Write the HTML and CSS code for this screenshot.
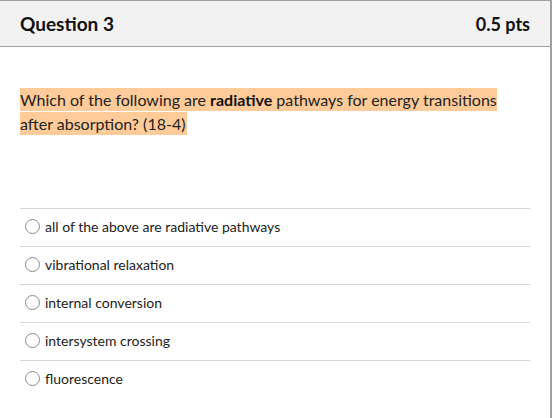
FILE: index.html
```html
<!DOCTYPE html>
<html>
<head>
<meta charset="utf-8">
<link rel="stylesheet" href="styles.css">
</head>
<body>
<div class="question">
  <div class="header">
    <span class="title">Question 3</span>
    <span class="pts">0.5 pts</span>
  </div>
  <div class="body">
    <p class="text"><span class="hl">Which of the following are <b>radiative</b> pathways for energy transitions after absorption? (18-4)</span></p>
    <div class="answers">
      <label class="answer"><span class="radio"></span>all of the above are radiative pathways</label>
      <label class="answer"><span class="radio"></span>vibrational relaxation</label>
      <label class="answer"><span class="radio"></span>internal conversion</label>
      <label class="answer"><span class="radio"></span>intersystem crossing</label>
      <label class="answer"><span class="radio"></span>fluorescence</label>
    </div>
  </div>
</div>
</body>
</html>
```

FILE: styles.css
```css
html, body {
  margin: 0;
  padding: 0;
  background: #fff;
}
body {
  font-family: Lato, "Liberation Sans", sans-serif;
  color: #2d3b45;
  width: 555px;
  height: 418px;
  overflow: hidden;
}
.question {
  width: 552px;
  box-sizing: border-box;
  border-top: 1px solid #a0a0a0;
  border-right: 2px solid #a0a0a0;
  height: 418px;
}
.header {
  display: flex;
  justify-content: space-between;
  align-items: center;
  height: 45px;
  background: #f2f2f2;
  border-bottom: 1px solid #a0a0a0;
  padding: 0 20px 0 20px;
  font-weight: bold;
  color: #111;
  font-size: 19px;
}
.pts {
  font-size: 18px;
}
.body {
  padding: 0 20px 0 20px;
}
.text {
  margin: 41px 0 0 0;
  font-size: 16px;
  line-height: 24px;
  color: #222;
  width: 500px;
}
.hl {
  background: #ffcc99;
  padding: 2px 2px 2px 0;
}
.text b {
  font-weight: bold;
  color: #111;
}
.answers {
  margin-top: 72px;
}
.answer {
  display: flex;
  align-items: center;
  height: 37px;
  box-sizing: border-box;
  height: 38px;
  padding-bottom: 3px;
  border-top: 1px solid #d8d8d8;
  font-size: 14px;
  color: #222;
  padding-left: 5px;
}
.radio {
  width: 13px;
  height: 13px;
  border: 1px solid #8a8a8a;
  border-radius: 50%;
  margin-right: 5px;
  box-sizing: content-box;
  background: #fff;
}
```
